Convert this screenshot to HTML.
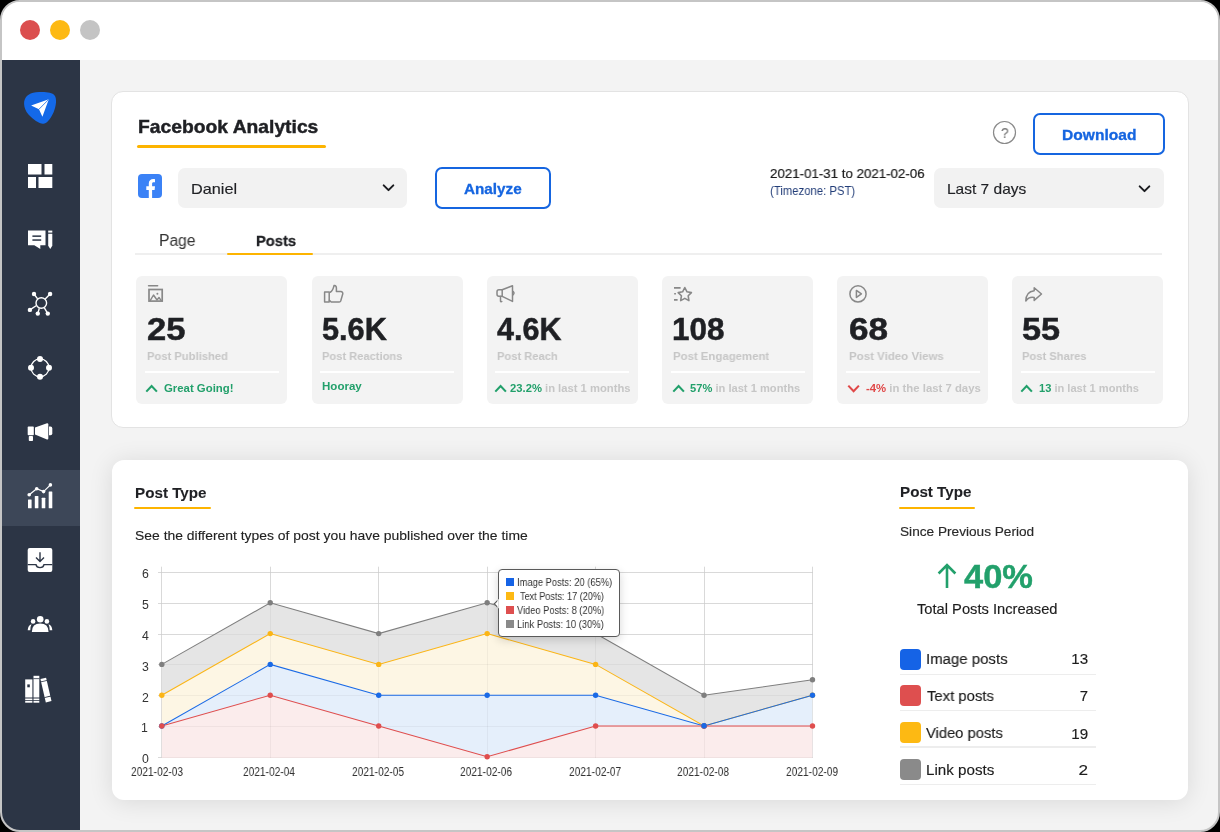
<!DOCTYPE html>
<html><head><meta charset="utf-8">
<style>
*{box-sizing:border-box;margin:0;padding:0}
html,body{width:1220px;height:832px;overflow:hidden;background:#000;font-family:"Liberation Sans",sans-serif;color:#1f2024}
.t{position:absolute;white-space:nowrap;will-change:transform}
.a{position:absolute}
#win{position:absolute;left:0;top:0;width:1220px;height:832px;border:2px solid #c5c5c5;border-radius:20px;overflow:hidden;background:#f3f3f3}
#title{position:absolute;left:0;top:0;width:1216px;height:58px;background:#fff}
.dot{position:absolute;top:18px;width:20px;height:20px;border-radius:50%}
#side{position:absolute;left:0;top:58px;width:78px;height:772px;background:#2c3545}
#sel{position:absolute;left:0;top:409.5px;width:78px;height:56px;background:#3d4758}
.card{position:absolute;background:#fff;border-radius:12px}
#c1{left:111px;top:91px;width:1078px;height:337px;border:1.5px solid #e3e3e3}
#c2{left:112px;top:460px;width:1076px;height:340px;box-shadow:0 2px 24px rgba(0,0,0,0.11)}
.stat{position:absolute;top:276px;width:151px;height:128px;background:#f3f3f3;border-radius:6px}
.stat .ln{position:absolute;left:8.5px;right:8.5px;top:95px;height:2px;background:#fff}
.sel{position:absolute;background:#f2f2f2;border-radius:7px}
.btn{position:absolute;border:2px solid #1565e0;border-radius:7px;background:#fff}
</style></head>
<body>
<div id="win">
  <div id="title">
    <div class="dot" style="left:18px;background:#db4e4e"></div>
    <div class="dot" style="left:48px;background:#fdb913"></div>
    <div class="dot" style="left:78px;background:#c4c4c4"></div>
  </div>
  <div id="side">
    <div id="sel"></div>
  </div>
</div>
<svg class="a" style="left:0;top:0" width="80" height="832" viewBox="0 0 80 832">
<g fill="#fff">
<!-- logo -->
<path d="M24.1 104 C23.8 98 28 93 36 92.3 C44 91.6 52 92 54.6 95.5 C57 98.5 56.3 106 53.5 112.5 C50.5 119 46.5 124 43 123.8 C39 123.6 33 119.5 28.5 114.5 C25.5 111 24.3 107.5 24.1 104 Z" fill="#1469e8"/>
<path d="M48.8 99.3 L31.1 105.5 L39 109.2 L42.4 116.8 Z" fill="#fff"/>
<path d="M39 109.2 L48.8 99.3" stroke="#1469e8" stroke-width="0.8" fill="none"/>
<!-- dashboard -->
<rect x="28" y="164" width="13.5" height="10.5"/>
<rect x="44.5" y="164" width="7.8" height="10.5"/>
<rect x="28" y="177" width="8" height="11"/>
<rect x="38.5" y="177" width="13.8" height="11"/>
<!-- chat edit -->
<path d="M28 230.6 H45.5 V245.3 H40.3 V249 L34.3 245.3 H28 Z"/>
<rect x="32.4" y="235.4" width="8.8" height="1.5" fill="#2c3545"/>
<rect x="32.4" y="239.3" width="8.8" height="1.5" fill="#2c3545"/>
<path d="M48.2 230.6 H52.3 V232.6 H48.2 Z"/>
<path d="M48.2 233.8 H52.3 V245.8 L50.25 249 L48.2 245.8 Z"/>
<!-- network -->
<g stroke="#fff" stroke-width="1.4" fill="none">
<circle cx="41.3" cy="303" r="5.3"/>
<path d="M34 294 L37.6 298.8 M50.1 294 L45.2 299 M29.9 309.9 L36.5 305.5 M37.8 313.6 L39.3 308.2 M47.8 313.6 L44.2 307.6"/>
</g>
<circle cx="34" cy="294" r="2.2"/><circle cx="50.1" cy="294" r="2.2"/><circle cx="29.9" cy="309.9" r="2.2"/><circle cx="37.8" cy="313.6" r="2.2"/><circle cx="47.8" cy="313.6" r="2.2"/>
<!-- diamond circle -->
<circle cx="40" cy="367.8" r="9" stroke="#fff" stroke-width="1.3" fill="none"/>
<circle cx="40" cy="358.9" r="3"/><circle cx="40" cy="376.8" r="3"/><circle cx="31" cy="367.8" r="3"/><circle cx="49" cy="367.8" r="3"/>
<!-- megaphone -->
<rect x="27.7" y="426.6" width="6.1" height="8.6" rx="0.8"/>
<rect x="28.8" y="436" width="4.2" height="5" rx="0.8"/>
<path d="M35 427.5 L47 423.2 Q48.3 423 48.3 424.3 V438.4 Q48.3 439.7 47 439.4 L35 434.5 Z"/>
<path d="M49 426.6 H50.5 Q52.3 426.6 52.3 428.4 V433.4 Q52.3 435.2 50.5 435.2 H49 Z"/>
<!-- chart -->
<rect x="28" y="499.6" width="3.6" height="8.6" rx="0.5"/>
<rect x="34.8" y="496" width="3.6" height="12.2" rx="0.5"/>
<rect x="41.7" y="497.8" width="3.6" height="10.4" rx="0.5"/>
<rect x="48.7" y="491.6" width="3.6" height="16.6" rx="0.5"/>
<path d="M29.2 494.8 L36.7 488.8 L43.6 491.6 L50.4 484.9" stroke="#fff" stroke-width="1.2" fill="none"/>
<circle cx="29.2" cy="494.8" r="1.8"/><circle cx="36.7" cy="488.8" r="1.8"/><circle cx="43.6" cy="491.6" r="1.8"/><circle cx="50.4" cy="484.9" r="1.8"/>
<!-- download tray -->
<rect x="27.7" y="548" width="24.6" height="24" rx="2"/>
<g stroke="#2c3545" stroke-width="1.4" fill="none">
<path d="M40 552.3 V561.3 M36 557.5 L40 561.5 L44 557.5"/>
<path d="M27.7 564.6 H36 Q36.5 567.6 40 567.6 Q43.5 567.6 44 564.6 H52.3"/>
</g>
<!-- people -->
<circle cx="40.2" cy="619.2" r="3.3"/>
<circle cx="33.1" cy="621.4" r="2.3"/>
<circle cx="46.9" cy="621.4" r="2.3"/>
<path d="M31.8 632 Q32 623.6 40.2 623.6 Q48.4 623.6 48.6 632 Z"/>
<path d="M27.7 630.3 Q28 625 31.5 624.2 Q30.2 626.8 30.3 630.3 Z"/>
<path d="M52.3 630.3 Q52 625 48.5 624.2 Q49.8 626.8 49.7 630.3 Z"/>
<!-- books -->
<rect x="25.2" y="679.4" width="7.2" height="23.3"/>
<rect x="33.5" y="675.8" width="5.8" height="26.9"/>
<g transform="rotate(-13 44 690)"><rect x="43" y="678.5" width="5.8" height="24"/></g>
<g fill="#2c3545">
<rect x="27.3" y="684.4" width="2.5" height="2.9"/>
<rect x="25" y="697.5" width="15" height="1"/>
<rect x="25" y="700" width="15" height="0.8"/>
<rect x="33.3" y="678.3" width="6.2" height="0.8"/>
<g transform="rotate(-13 44 690)"><rect x="42.5" y="697" width="7" height="0.9"/><rect x="42.5" y="681" width="7" height="0.8"/></g>
</g>
</g>
</svg>
<div class="card" id="c1"></div>
<div class="t" style="left:137.55px;top:119.45px;font-size:17.9px;line-height:17.9px;font-weight:700;color:#1f2024;-webkit-text-stroke:0.45px currentColor;transform:scaleX(1.0775);transform-origin:0 0;">Facebook Analytics</div>
<div class="a" style="left:137px;top:145px;width:189px;height:3px;border-radius:2px;background:#fdb400"></div>
<svg class="a" style="left:138px;top:174px" width="24" height="24" viewBox="0 0 24 24">
<rect width="24" height="24" rx="4" fill="#3b82f6"/>
<path d="M10.8 24 V16 H8.3 V12.2 H10.8 V9.6 C10.8 6.6 12.6 5 15.3 5 C16 5 16.6 5.1 17 5.2 V8.3 H15.6 C14.6 8.3 14.1 8.8 14.1 9.8 V12.2 H17 L16.6 16 H14.1 V24 Z" fill="#fff"/>
</svg>
<div class="sel" style="left:178px;top:168px;width:229px;height:40px"></div>
<div class="t" style="left:191.20px;top:182.18px;font-size:14.2px;line-height:14.2px;font-weight:400;color:#1f2024;-webkit-text-stroke:0.15px currentColor;transform:scaleX(1.1467);transform-origin:0 0;">Daniel</div>
<svg class="a" style="left:382px;top:183px" width="13" height="10" viewBox="0 0 13 10"><path d="M1.7 2.4 L6.5 7.1 L11.3 2.4" stroke="#1a1b1f" stroke-width="2" stroke-linecap="round" stroke-linejoin="round" fill="none"/></svg>
<div class="btn" style="left:435px;top:167px;width:116px;height:42px"></div>
<div class="t" style="left:464.02px;top:182.45px;font-size:14.35px;line-height:14.35px;font-weight:700;color:#1565e0;-webkit-text-stroke:0.3px currentColor;transform:scaleX(1.0645);transform-origin:0 0;">Analyze</div>
<div class="a" style="left:135px;top:253px;width:1027px;height:2px;background:#efefef"></div>
<div class="t" style="left:159.35px;top:232.76px;font-size:16px;line-height:16px;font-weight:400;color:#333;transform:scaleX(0.9763);transform-origin:0 0;">Page</div>
<div class="t" style="left:255.74px;top:233.32px;font-size:15.1px;line-height:15.1px;font-weight:700;color:#1f2024;-webkit-text-stroke:0.3px currentColor;transform:scaleX(0.9750);transform-origin:0 0;">Posts</div>
<div class="a" style="left:227px;top:252.7px;width:86px;height:2.6px;border-radius:2px;background:#fdb400"></div>
<svg class="a" style="left:992px;top:120px" width="25" height="25" viewBox="0 0 25 25"><circle cx="12.5" cy="12.5" r="11" stroke="#8a8a8a" stroke-width="1.2" fill="none"/></svg>
<div class="t" style="left:1001.25px;top:125.30px;font-size:15px;line-height:15px;font-weight:400;color:#7a7a7a;-webkit-text-stroke:0.2px currentColor;transform:scaleX(0.9167);transform-origin:0 0;">?</div>
<div class="btn" style="left:1033px;top:113px;width:132px;height:42px"></div>
<div class="t" style="left:1061.89px;top:127.81px;font-size:14.4px;line-height:14.4px;font-weight:700;color:#1565e0;-webkit-text-stroke:0.3px currentColor;transform:scaleX(1.0824);transform-origin:0 0;">Download</div>
<div class="t" style="left:769.63px;top:167.07px;font-size:13.5px;line-height:13.5px;font-weight:400;color:#1d1d1d;-webkit-text-stroke:0.2px currentColor;transform:scaleX(0.9862);transform-origin:0 0;">2021-01-31 to 2021-02-06</div>
<div class="t" style="left:769.92px;top:184.90px;font-size:12.4px;line-height:12.4px;font-weight:400;color:#223d78;transform:scaleX(0.9139);transform-origin:0 0;">(Timezone: PST)</div>
<div class="sel" style="left:934px;top:168px;width:230px;height:40px"></div>
<div class="t" style="left:947.36px;top:181.88px;font-size:14.2px;line-height:14.2px;font-weight:400;color:#1f2024;-webkit-text-stroke:0.15px currentColor;transform:scaleX(1.0930);transform-origin:0 0;">Last 7 days</div>
<svg class="a" style="left:1138px;top:183.6px" width="13" height="10" viewBox="0 0 13 10"><path d="M1.7 2.4 L6.5 7.1 L11.3 2.4" stroke="#1a1b1f" stroke-width="2" stroke-linecap="round" stroke-linejoin="round" fill="none"/></svg>
<div class="stat" style="left:136.4px"><div class="ln"></div></div>
<div class="t" style="left:146.89px;top:314.28px;font-size:30.5px;line-height:30.5px;font-weight:700;color:#1f2024;-webkit-text-stroke:0.5px currentColor;transform:scaleX(1.1335);transform-origin:0 0;">25</div>
<div class="t" style="left:146.87px;top:350.40px;font-size:11.7px;line-height:11.7px;font-weight:700;color:#c6c6c6;transform:scaleX(0.9577);transform-origin:0 0;">Post Published</div>
<div class="stat" style="left:311.6px"><div class="ln"></div></div>
<div class="t" style="left:322.48px;top:314.28px;font-size:30.5px;line-height:30.5px;font-weight:700;color:#1f2024;-webkit-text-stroke:0.5px currentColor;transform:scaleX(1.0058);transform-origin:0 0;">5.6K</div>
<div class="t" style="left:322.28px;top:350.40px;font-size:11.7px;line-height:11.7px;font-weight:700;color:#c6c6c6;transform:scaleX(0.9519);transform-origin:0 0;">Post Reactions</div>
<div class="stat" style="left:486.8px"><div class="ln"></div></div>
<div class="t" style="left:497.14px;top:314.28px;font-size:30.5px;line-height:30.5px;font-weight:700;color:#1f2024;-webkit-text-stroke:0.5px currentColor;transform:scaleX(0.9985);transform-origin:0 0;">4.6K</div>
<div class="t" style="left:496.87px;top:350.40px;font-size:11.7px;line-height:11.7px;font-weight:700;color:#c6c6c6;transform:scaleX(0.9543);transform-origin:0 0;">Post Reach</div>
<div class="stat" style="left:662.0px"><div class="ln"></div></div>
<div class="t" style="left:672.01px;top:314.28px;font-size:30.5px;line-height:30.5px;font-weight:700;color:#1f2024;-webkit-text-stroke:0.5px currentColor;transform:scaleX(1.0304);transform-origin:0 0;">108</div>
<div class="t" style="left:673.16px;top:350.40px;font-size:11.7px;line-height:11.7px;font-weight:700;color:#c6c6c6;transform:scaleX(0.9742);transform-origin:0 0;">Post Engagement</div>
<div class="stat" style="left:837.2px"><div class="ln"></div></div>
<div class="t" style="left:848.57px;top:314.28px;font-size:30.5px;line-height:30.5px;font-weight:700;color:#1f2024;-webkit-text-stroke:0.5px currentColor;transform:scaleX(1.1515);transform-origin:0 0;">68</div>
<div class="t" style="left:848.85px;top:350.40px;font-size:11.7px;line-height:11.7px;font-weight:700;color:#c6c6c6;transform:scaleX(0.9839);transform-origin:0 0;">Post Video Views</div>
<div class="stat" style="left:1012.0px"><div class="ln"></div></div>
<div class="t" style="left:1022.37px;top:314.28px;font-size:30.5px;line-height:30.5px;font-weight:700;color:#1f2024;-webkit-text-stroke:0.5px currentColor;transform:scaleX(1.1219);transform-origin:0 0;">55</div>
<div class="t" style="left:1021.87px;top:350.40px;font-size:11.7px;line-height:11.7px;font-weight:700;color:#c6c6c6;transform:scaleX(0.9564);transform-origin:0 0;">Post Shares</div>
<svg class="a" style="left:145.30px;top:384.3px" width="14" height="9" viewBox="0 0 14 9"><path d="M1.3 7.6 L6.6 2 L11.9 7.6" stroke="#22a06b" stroke-width="2.1" fill="none"/></svg>
<div class="t" style="left:163.94px;top:383.67px;font-size:10.2px;line-height:10.2px;font-weight:700;color:#22a06b;transform:scaleX(1.1165);transform-origin:0 0;">Great Going!</div>
<div class="t" style="left:322.25px;top:381.67px;font-size:10.2px;line-height:10.2px;font-weight:700;color:#22a06b;transform:scaleX(1.1329);transform-origin:0 0;">Hooray</div>
<svg class="a" style="left:493.60px;top:384.3px" width="14" height="9" viewBox="0 0 14 9"><path d="M1.3 7.6 L6.6 2 L11.9 7.6" stroke="#22a06b" stroke-width="2.1" fill="none"/></svg>
<div class="t" style="left:509.91px;top:383.77px;font-size:10.2px;line-height:10.2px;font-weight:700;color:#22a06b;transform:scaleX(1.1037);transform-origin:0 0;">23.2% <span style="color:#c6c6c6">in last 1 months</span></div>
<svg class="a" style="left:671.70px;top:384.3px" width="14" height="9" viewBox="0 0 14 9"><path d="M1.3 7.6 L6.6 2 L11.9 7.6" stroke="#22a06b" stroke-width="2.1" fill="none"/></svg>
<div class="t" style="left:690.47px;top:383.77px;font-size:10.2px;line-height:10.2px;font-weight:700;color:#22a06b;transform:scaleX(1.0932);transform-origin:0 0;">57% <span style="color:#c6c6c6">in last 1 months</span></div>
<svg class="a" style="left:847.30px;top:383.6px" width="14" height="9" viewBox="0 0 14 9"><path d="M1.3 1.6 L6.6 7.2 L11.9 1.6" stroke="#e04848" stroke-width="2.1" fill="none"/></svg>
<div class="t" style="left:865.75px;top:383.77px;font-size:10.2px;line-height:10.2px;font-weight:700;color:#e04848;transform:scaleX(1.1137);transform-origin:0 0;">-4% <span style="color:#c6c6c6">in the last 7 days</span></div>
<svg class="a" style="left:1020.20px;top:384.3px" width="14" height="9" viewBox="0 0 14 9"><path d="M1.3 7.6 L6.6 2 L11.9 7.6" stroke="#22a06b" stroke-width="2.1" fill="none"/></svg>
<div class="t" style="left:1038.53px;top:383.77px;font-size:10.2px;line-height:10.2px;font-weight:700;color:#22a06b;transform:scaleX(1.0883);transform-origin:0 0;">13 <span style="color:#c6c6c6">in last 1 months</span></div>
<svg class="a" style="left:0;top:0;pointer-events:none" width="1220" height="320" viewBox="0 0 1220 320">
<g stroke="#888" fill="none" stroke-width="1.6" stroke-linejoin="round" stroke-linecap="round">
<!-- image -->
<path d="M148.6 285.8 H157.6" stroke-width="1.6"/>
<rect x="149" y="289.5" width="13.2" height="11.6" stroke-width="1.7" stroke-linejoin="miter"/>
<path d="M150.2 300.6 L153.5 295 L157 300 L159 297.5 L161.2 300.6" stroke-width="1.4"/>
<!-- thumb -->
<rect x="324.6" y="292" width="4.6" height="10" stroke-width="1.5"/>
<path d="M329.4 300.3 L331.2 302 H339.3 Q340.3 302 340.7 301 L342.8 293.8 Q343 291.7 340.8 291.6 H336.4 V288 Q336.4 285.6 334.5 285.5 L334 285.6 Q332.8 291 330.2 292.2" stroke-width="1.5"/>
<!-- megaphone -->
<path d="M502.2 289.8 H499 Q497 289.8 497 291.8 V294.3 Q497 296.3 499 296.3 H502.2 Z" stroke-width="1.5"/>
<path d="M502.2 289.8 L512.5 285.8 V301.4 L502.2 296.3" stroke-width="1.5"/>
<path d="M513.2 291.6 Q514.8 293 513.2 294.6" stroke-width="1.5"/>
<path d="M500.5 296.6 V301.2 Q501 302.2 501.8 301.5" stroke-width="1.5"/>
<!-- star list -->
<path d="M674 287.9 H680.6 M674.2 293.8 H675.9 M674 299.9 H677.6" stroke-width="1.6" stroke-linecap="butt"/>
<path d="M684.8 287.5 L687 291.8 L691.4 292.6 L688.2 295.8 L688.9 300.6 L684.8 298.4 L680.7 300.6 L681.4 295.8 L678.2 292.6 L682.6 291.8 Z" stroke-width="1.6"/>
<!-- play -->
<circle cx="858" cy="293.9" r="8.1" stroke-width="1.5"/>
<path d="M856.4 290.4 L861.4 293.9 L856.4 297.4 Z" stroke-width="1.5"/>
<!-- share -->
<path d="M1034.2 287.8 L1041.5 294 L1034.2 300.4 V297.4 Q1029 296.3 1025.8 301 Q1026 291.6 1034.2 290.7 Z" stroke-width="1.5"/>
</g>
<circle cx="157.4" cy="293.8" r="1" fill="#888"/>
</svg>
<div class="card" id="c2"></div>
<div class="t" style="left:134.61px;top:485.36px;font-size:15.05px;line-height:15.05px;font-weight:700;color:#1f2024;-webkit-text-stroke:0.1px currentColor;transform:scaleX(1.0104);transform-origin:0 0;">Post Type</div>
<div class="a" style="left:134px;top:506.5px;width:77px;height:2.5px;border-radius:2px;background:#fdb400"></div>
<div class="t" style="left:134.97px;top:529.68px;font-size:12.9px;line-height:12.9px;font-weight:400;color:#222;-webkit-text-stroke:0.12px currentColor;transform:scaleX(1.0795);transform-origin:0 0;">See the different types of post you have published over the time</div>
<div class="t" style="left:899.81px;top:483.66px;font-size:15.05px;line-height:15.05px;font-weight:700;color:#1f2024;-webkit-text-stroke:0.1px currentColor;transform:scaleX(1.0089);transform-origin:0 0;">Post Type</div>
<div class="a" style="left:899px;top:506.7px;width:76px;height:2.5px;border-radius:2px;background:#fdb400"></div>
<div class="t" style="left:899.89px;top:525.87px;font-size:12.2px;line-height:12.2px;font-weight:400;color:#2a2a2a;-webkit-text-stroke:0.15px currentColor;transform:scaleX(1.1190);transform-origin:0 0;">Since Previous Period</div>
<svg class="a" style="left:936px;top:563px" width="22" height="26" viewBox="0 0 22 26"><path d="M11 25 V2.5 M2.6 10.5 L11 2 L19.4 10.5" stroke="#22a06b" stroke-width="2.6" fill="none"/></svg>
<div class="t" style="left:964.38px;top:560.50px;font-size:32.6px;line-height:32.6px;font-weight:700;color:#22a06b;-webkit-text-stroke:0.4px currentColor;transform:scaleX(1.0580);transform-origin:0 0;">40%</div>
<div class="t" style="left:916.71px;top:602.03px;font-size:14.5px;line-height:14.5px;font-weight:400;color:#1d1d1d;-webkit-text-stroke:0.15px currentColor;transform:scaleX(1.0134);transform-origin:0 0;">Total Posts Increased</div>
<div class="a" style="left:900px;top:648.6px;width:21px;height:21px;border-radius:4px;background:#1563e6"></div>
<div class="t" style="left:925.55px;top:650.93px;font-size:15.2px;line-height:15.2px;font-weight:400;color:#1d1d1d;-webkit-text-stroke:0.15px currentColor;transform:scaleX(0.9856);transform-origin:0 0;">Image posts</div>
<div class="t" style="right:131.86px;top:652.43px;font-size:14.5px;line-height:14.5px;font-weight:400;color:#1d1d1d;-webkit-text-stroke:0.15px currentColor;transform:scaleX(1.0397);transform-origin:100% 0;">13</div>
<div class="a" style="left:900px;top:673.5px;width:196px;height:1.5px;background:#ededed"></div>
<div class="a" style="left:900px;top:685.0px;width:21px;height:21px;border-radius:4px;background:#de4f4f"></div>
<div class="t" style="left:926.60px;top:687.93px;font-size:15.2px;line-height:15.2px;font-weight:400;color:#1d1d1d;-webkit-text-stroke:0.15px currentColor;transform:scaleX(0.9783);transform-origin:0 0;">Text posts</div>
<div class="t" style="right:131.74px;top:689.43px;font-size:14.5px;line-height:14.5px;font-weight:400;color:#1d1d1d;-webkit-text-stroke:0.15px currentColor;transform:scaleX(1.0307);transform-origin:100% 0;">7</div>
<div class="a" style="left:900px;top:709.9px;width:196px;height:1.5px;background:#ededed"></div>
<div class="a" style="left:900px;top:722.0px;width:21px;height:21px;border-radius:4px;background:#fdb913"></div>
<div class="t" style="left:926.43px;top:725.43px;font-size:15.2px;line-height:15.2px;font-weight:400;color:#1d1d1d;-webkit-text-stroke:0.15px currentColor;transform:scaleX(0.9709);transform-origin:0 0;">Video posts</div>
<div class="t" style="right:131.79px;top:726.93px;font-size:14.5px;line-height:14.5px;font-weight:400;color:#1d1d1d;-webkit-text-stroke:0.15px currentColor;transform:scaleX(1.0449);transform-origin:100% 0;">19</div>
<div class="a" style="left:900px;top:746.3px;width:196px;height:1.5px;background:#ededed"></div>
<div class="a" style="left:900px;top:758.5px;width:21px;height:21px;border-radius:4px;background:#8a8a8a"></div>
<div class="t" style="left:925.68px;top:761.83px;font-size:15.2px;line-height:15.2px;font-weight:400;color:#1d1d1d;-webkit-text-stroke:0.15px currentColor;transform:scaleX(0.9996);transform-origin:0 0;">Link posts</div>
<div class="t" style="right:131.62px;top:763.33px;font-size:14.5px;line-height:14.5px;font-weight:400;color:#1d1d1d;-webkit-text-stroke:0.15px currentColor;transform:scaleX(1.1823);transform-origin:100% 0;">2</div>
<div class="a" style="left:900px;top:783.8px;width:196px;height:1.5px;background:#ededed"></div>
<svg class="a" style="left:0;top:0" width="1220" height="832" viewBox="0 0 1220 832">
<path d="M158 757.5 H813" stroke="#e3e3e3" stroke-width="1"/>
<path d="M158 726.5 H813" stroke="#e3e3e3" stroke-width="1"/>
<path d="M158 695.5 H813" stroke="#e3e3e3" stroke-width="1"/>
<path d="M158 664.5 H813" stroke="#e3e3e3" stroke-width="1"/>
<path d="M158 634.5 H813" stroke="#e3e3e3" stroke-width="1"/>
<path d="M158 603.5 H813" stroke="#e3e3e3" stroke-width="1"/>
<path d="M158 572.5 H813" stroke="#e3e3e3" stroke-width="1"/>
<path d="M161.5 566.7 V758" stroke="#e3e3e3" stroke-width="1"/>
<path d="M270.5 566.7 V758" stroke="#e3e3e3" stroke-width="1"/>
<path d="M378.5 566.7 V758" stroke="#e3e3e3" stroke-width="1"/>
<path d="M487.5 566.7 V758" stroke="#e3e3e3" stroke-width="1"/>
<path d="M595.5 566.7 V758" stroke="#e3e3e3" stroke-width="1"/>
<path d="M704.5 566.7 V758" stroke="#e3e3e3" stroke-width="1"/>
<path d="M812.5 566.7 V758" stroke="#e3e3e3" stroke-width="1"/>
<path d="M161.80,758 L161.80,664.40 270.25,602.80 378.70,633.60 487.15,602.80 595.60,633.60 704.05,695.20 812.50,679.80 L812.50,758 Z" fill="#e5e5e5"/>
<path d="M161.80,758 L161.80,695.20 270.25,633.60 378.70,664.40 487.15,633.60 595.60,664.40 704.05,726.00 812.50,695.20 L812.50,758 Z" fill="#fdf6e4"/>
<path d="M161.80,758 L161.80,726.00 270.25,664.40 378.70,695.20 487.15,695.20 595.60,695.20 704.05,726.00 812.50,695.20 L812.50,758 Z" fill="#e5effb"/>
<path d="M161.80,758 L161.80,726.00 270.25,695.20 378.70,726.00 487.15,756.80 595.60,726.00 704.05,726.00 812.50,726.00 L812.50,758 Z" fill="#fbecec"/>
<path d="M158 757.5 H813" stroke="#000" stroke-opacity="0.045" stroke-width="1"/>
<path d="M158 726.5 H813" stroke="#000" stroke-opacity="0.045" stroke-width="1"/>
<path d="M158 695.5 H813" stroke="#000" stroke-opacity="0.045" stroke-width="1"/>
<path d="M158 664.5 H813" stroke="#000" stroke-opacity="0.045" stroke-width="1"/>
<path d="M158 634.5 H813" stroke="#000" stroke-opacity="0.045" stroke-width="1"/>
<path d="M158 603.5 H813" stroke="#000" stroke-opacity="0.045" stroke-width="1"/>
<path d="M158 572.5 H813" stroke="#000" stroke-opacity="0.045" stroke-width="1"/>
<path d="M161.5 566.7 V758" stroke="#000" stroke-opacity="0.045" stroke-width="1"/>
<path d="M270.5 566.7 V758" stroke="#000" stroke-opacity="0.045" stroke-width="1"/>
<path d="M378.5 566.7 V758" stroke="#000" stroke-opacity="0.045" stroke-width="1"/>
<path d="M487.5 566.7 V758" stroke="#000" stroke-opacity="0.045" stroke-width="1"/>
<path d="M595.5 566.7 V758" stroke="#000" stroke-opacity="0.045" stroke-width="1"/>
<path d="M704.5 566.7 V758" stroke="#000" stroke-opacity="0.045" stroke-width="1"/>
<path d="M812.5 566.7 V758" stroke="#000" stroke-opacity="0.045" stroke-width="1"/>
<path d="M161.80,664.40 L270.25,602.80 L378.70,633.60 L487.15,602.80 L595.60,633.60 L704.05,695.20 L812.50,679.80" stroke="#7f7f7f" stroke-width="1.05" fill="none"/>
<path d="M161.80,695.20 L270.25,633.60 L378.70,664.40 L487.15,633.60 L595.60,664.40 L704.05,726.00 L812.50,695.20" stroke="#fbb516" stroke-width="1.05" fill="none"/>
<path d="M161.80,726.00 L270.25,664.40 L378.70,695.20 L487.15,695.20 L595.60,695.20 L704.05,726.00 L812.50,695.20" stroke="#1a6ae6" stroke-width="1.05" fill="none"/>
<path d="M161.80,726.00 L270.25,695.20 L378.70,726.00 L487.15,756.80 L595.60,726.00 L704.05,726.00 L812.50,726.00" stroke="#df4e4e" stroke-width="1.05" fill="none"/>
<circle cx="161.80" cy="664.40" r="2.7" fill="#7f7f7f"/>
<circle cx="270.25" cy="602.80" r="2.7" fill="#7f7f7f"/>
<circle cx="378.70" cy="633.60" r="2.7" fill="#7f7f7f"/>
<circle cx="487.15" cy="602.80" r="2.7" fill="#7f7f7f"/>
<circle cx="595.60" cy="633.60" r="2.7" fill="#7f7f7f"/>
<circle cx="704.05" cy="695.20" r="2.7" fill="#7f7f7f"/>
<circle cx="812.50" cy="679.80" r="2.7" fill="#7f7f7f"/>
<circle cx="161.80" cy="695.20" r="2.7" fill="#fbb516"/>
<circle cx="270.25" cy="633.60" r="2.7" fill="#fbb516"/>
<circle cx="378.70" cy="664.40" r="2.7" fill="#fbb516"/>
<circle cx="487.15" cy="633.60" r="2.7" fill="#fbb516"/>
<circle cx="595.60" cy="664.40" r="2.7" fill="#fbb516"/>
<circle cx="704.05" cy="726.00" r="2.7" fill="#fbb516"/>
<circle cx="812.50" cy="695.20" r="2.7" fill="#fbb516"/>
<circle cx="161.80" cy="726.00" r="2.7" fill="#1a6ae6"/>
<circle cx="270.25" cy="664.40" r="2.7" fill="#1a6ae6"/>
<circle cx="378.70" cy="695.20" r="2.7" fill="#1a6ae6"/>
<circle cx="487.15" cy="695.20" r="2.7" fill="#1a6ae6"/>
<circle cx="595.60" cy="695.20" r="2.7" fill="#1a6ae6"/>
<circle cx="704.05" cy="726.00" r="2.7" fill="#1a6ae6"/>
<circle cx="812.50" cy="695.20" r="2.7" fill="#1a6ae6"/>
<circle cx="161.80" cy="726.00" r="2.7" fill="#df4e4e"/>
<circle cx="270.25" cy="695.20" r="2.7" fill="#df4e4e"/>
<circle cx="378.70" cy="726.00" r="2.7" fill="#df4e4e"/>
<circle cx="487.15" cy="756.80" r="2.7" fill="#df4e4e"/>
<circle cx="595.60" cy="726.00" r="2.7" fill="#df4e4e"/>
<circle cx="704.05" cy="726.00" r="2.7" fill="#df4e4e"/>
<circle cx="812.50" cy="726.00" r="2.7" fill="#df4e4e"/>
<circle cx="704.05" cy="725.70" r="2.7" fill="#1a6ae6"/>
</svg>
<div class="t" style="left:141.91px;top:753.19px;font-size:12.3px;line-height:12.3px;font-weight:400;color:#333;">0</div>
<div class="t" style="left:141.48px;top:722.39px;font-size:12.3px;line-height:12.3px;font-weight:400;color:#333;">1</div>
<div class="t" style="left:141.78px;top:691.59px;font-size:12.3px;line-height:12.3px;font-weight:400;color:#333;">2</div>
<div class="t" style="left:141.97px;top:660.79px;font-size:12.3px;line-height:12.3px;font-weight:400;color:#333;">3</div>
<div class="t" style="left:142.15px;top:629.99px;font-size:12.3px;line-height:12.3px;font-weight:400;color:#333;">4</div>
<div class="t" style="left:141.91px;top:599.19px;font-size:12.3px;line-height:12.3px;font-weight:400;color:#333;">5</div>
<div class="t" style="left:141.78px;top:568.39px;font-size:12.3px;line-height:12.3px;font-weight:400;color:#333;">6</div>
<div class="t" style="left:130.69px;top:765.67px;font-size:12.2px;line-height:12.2px;font-weight:400;color:#333;transform:scaleX(0.8352);transform-origin:0 0;">2021-02-03</div>
<div class="t" style="left:243.39px;top:765.67px;font-size:12.2px;line-height:12.2px;font-weight:400;color:#333;transform:scaleX(0.8327);transform-origin:0 0;">2021-02-04</div>
<div class="t" style="left:351.99px;top:765.67px;font-size:12.2px;line-height:12.2px;font-weight:400;color:#333;transform:scaleX(0.8352);transform-origin:0 0;">2021-02-05</div>
<div class="t" style="left:460.49px;top:765.67px;font-size:12.2px;line-height:12.2px;font-weight:400;color:#333;transform:scaleX(0.8352);transform-origin:0 0;">2021-02-06</div>
<div class="t" style="left:568.69px;top:765.67px;font-size:12.2px;line-height:12.2px;font-weight:400;color:#333;transform:scaleX(0.8368);transform-origin:0 0;">2021-02-07</div>
<div class="t" style="left:677.49px;top:765.67px;font-size:12.2px;line-height:12.2px;font-weight:400;color:#333;transform:scaleX(0.8352);transform-origin:0 0;">2021-02-08</div>
<div class="t" style="left:785.69px;top:765.67px;font-size:12.2px;line-height:12.2px;font-weight:400;color:#333;transform:scaleX(0.8360);transform-origin:0 0;">2021-02-09</div>
<div class="a" style="left:497.5px;top:568.8px;width:122px;height:68.5px;background:#fff;border:1.2px solid #5a5a5a;border-radius:4px;box-shadow:0 3px 10px rgba(0,0,0,0.16)"></div>
<svg class="a" style="left:492px;top:598px" width="8" height="12" viewBox="0 0 8 12"><path d="M6.2 1.8 L2.3 5.8 L6.2 9.8" fill="#fff" stroke="#5a5a5a" stroke-width="1.1"/><path d="M6.1 1.3 V10.3" stroke="#fff" stroke-width="1.3"/></svg>
<div class="a" style="left:505.6px;top:578.00px;width:8.6px;height:8.4px;background:#1563e6"></div>
<div class="t" style="left:516.66px;top:577.30px;font-size:10.75px;line-height:10.75px;font-weight:400;color:#333;transform:scaleX(0.8708);transform-origin:0 0;">Image Posts: 20 (65%)</div>
<div class="a" style="left:505.6px;top:591.85px;width:8.6px;height:8.4px;background:#fdb913"></div>
<div class="t" style="left:519.82px;top:591.15px;font-size:10.75px;line-height:10.75px;font-weight:400;color:#333;transform:scaleX(0.8473);transform-origin:0 0;">Text Posts: 17 (20%)</div>
<div class="a" style="left:505.6px;top:605.70px;width:8.6px;height:8.4px;background:#de4f4f"></div>
<div class="t" style="left:517.45px;top:605.00px;font-size:10.75px;line-height:10.75px;font-weight:400;color:#333;transform:scaleX(0.8643);transform-origin:0 0;">Video Posts: 8 (20%)</div>
<div class="a" style="left:505.6px;top:619.55px;width:8.6px;height:8.4px;background:#8a8a8a"></div>
<div class="t" style="left:516.75px;top:618.85px;font-size:10.75px;line-height:10.75px;font-weight:400;color:#333;transform:scaleX(0.8755);transform-origin:0 0;">Link Posts: 10 (30%)</div>
</body></html>
